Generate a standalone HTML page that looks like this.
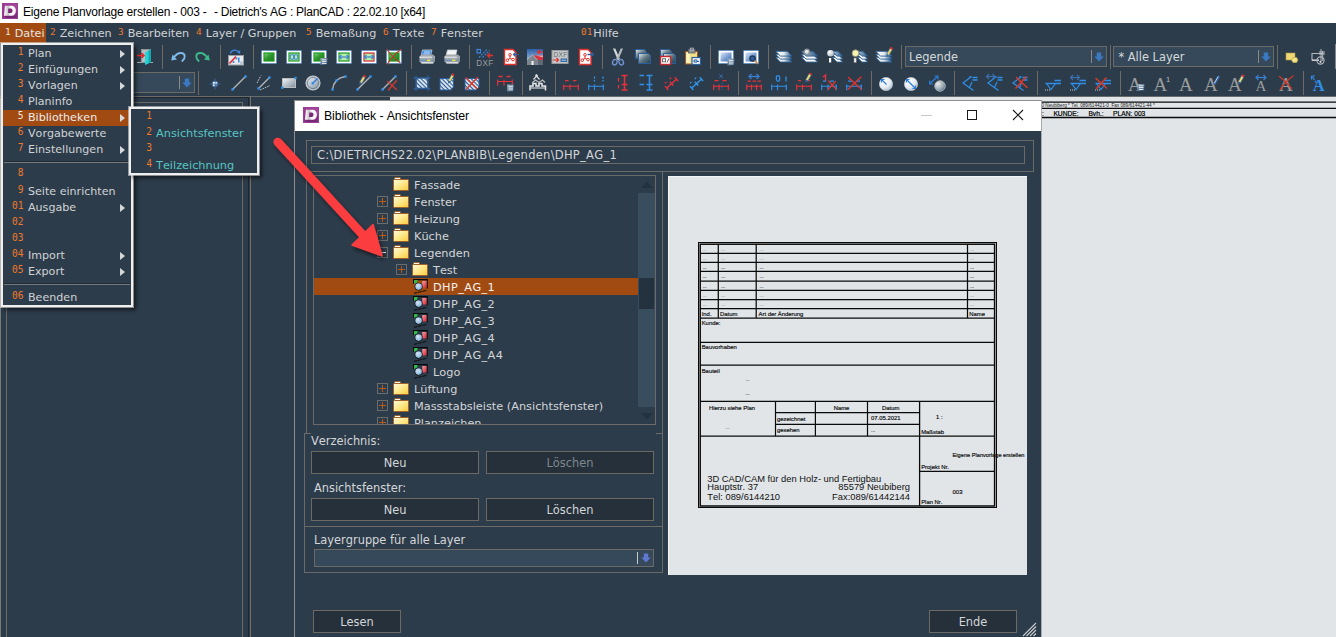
<!DOCTYPE html>
<html lang="de">
<head>
<meta charset="utf-8">
<title>Eigene Planvorlage erstellen - 003</title>
<style>
*{box-sizing:border-box;margin:0;padding:0}
html,body{width:1336px;height:637px;overflow:hidden;background:#2d3c4b}
body{position:relative;font-kerning:none;font-family:"DejaVu Sans","Liberation Sans",sans-serif;font-size:11.3px;color:#d3d6d8}
.a{position:absolute}
.t{position:absolute;white-space:nowrap;line-height:16px}
.ln{position:absolute;background:#6e6b67}
.paper{background:#e1e5e8}
/* title bar */
#tb{left:0;top:0;width:1336px;height:23px;background:#fff}
#tb .t{font-family:"Liberation Sans",sans-serif;font-size:12px;color:#000;top:4px;letter-spacing:-0.2px}
/* menubar */
#mb{left:0;top:23px;width:1336px;height:20px;background:#2d3c4b}
#mb .t{top:2.5px;font-size:11.2px;color:#d0d3d5}
#mb .n{font-family:"DejaVu Sans Mono",monospace;font-size:9.4px;color:#ee7a2a;position:relative;top:-1.5px;margin-right:4px}
.hl{background:#a14b12}
/* menus */
.menu{position:absolute;background:#2d3c4b;border:2px solid #efefef;outline:1px solid rgba(235,235,235,.55);box-shadow:3px 3px 4px rgba(0,0,0,.6)}
.mi{position:absolute;left:0;height:16px;line-height:16px;white-space:nowrap;font-size:11.1px;color:#d0d3d5}
.mi .n{position:absolute;top:-2px;font-family:"DejaVu Sans Mono",monospace;font-size:9.6px;color:#ee7a2a;text-align:right;width:14px}
.mi .x{position:absolute;left:25px;top:-0.5px}
.mi .ar{position:absolute;left:116px;top:4px;width:0;height:0;border-left:5px solid #d8d8d8;border-top:4px solid transparent;border-bottom:4px solid transparent}
.sep{position:absolute;height:1px;background:#777a7c;box-shadow:0 -1px 0 #202b36}
.cy{color:#55c6c3;font-size:11.3px}
/* dialog */
.btn{position:absolute;background:#25303b;border:1px solid #6c6a64;text-align:center;font-size:11.6px;color:#d3d6d8;line-height:20px;height:22px}
.fld{position:absolute;background:#35495a;border:1px solid #6c6a64}
.grp{position:absolute;border:1px solid #6c6a64}
.tree{font-size:11.3px;color:#d3d6d8}
</style>
</head>
<body>
<!-- ===== main drawing paper (right) ===== -->
<div class="a paper" style="left:390px;top:97px;width:946px;height:540px"></div>
<svg class="a" style="left:1042px;top:97px;font-family:'Liberation Sans',sans-serif" width="294" height="30" viewBox="1042 97 294 30">
<path d="M1042 102.200H1336" stroke="#0a0a0a" stroke-width="1.300"/><path d="M1042 108.400H1336" stroke="#0a0a0a" stroke-width="1.100"/><path d="M1042 117.600H1336" stroke="#0a0a0a" stroke-width="1.500"/>
<text x="1041.500" y="107.200" font-size="4.650" fill="#222">0 Neubiberg * Tel. 089/614421-0&#160; Fax 089/614421-44 *</text>
<text x="1042" y="115.900" font-size="6.700" fill="#000" stroke="#000" stroke-width=".2">:</text>
<text x="1053.400" y="115.900" font-size="6.700" fill="#000" stroke="#000" stroke-width=".2">KUNDE:</text>
<text x="1088.400" y="115.900" font-size="6.700" fill="#000" stroke="#000" stroke-width=".2">Bvh.:</text>
<text x="1113" y="115.900" font-size="6.700" fill="#000" stroke="#000" stroke-width=".2">PLAN: 003</text>
</svg>

<!-- ===== title bar ===== -->
<div class="a" id="tb">
  <svg class="a" style="left:2px;top:3px" width="16" height="16" viewBox="0 0 16 16"><defs><linearGradient id="lgP" x1="0" y1="1" x2="1" y2="0"><stop offset="0" stop-color="#8a2c83"/><stop offset="1" stop-color="#a94ba2"/></linearGradient><linearGradient id="lgD" x1="0" y1="0" x2="1" y2="0"><stop offset="0" stop-color="#ffffff"/><stop offset=".35" stop-color="#c9c4c8"/><stop offset=".6" stop-color="#ffffff"/><stop offset="1" stop-color="#f4eef3"/></linearGradient></defs><rect width="16" height="16" fill="url(#lgP)"/><path d="M2.100 12.800L13 12.800L16 16H5.300z" fill="#6a2266" opacity=".7"/><path d="M13.800 7.800L16 10V16L13 12.800z" fill="#6a2266" opacity=".55"/><rect x=".5" y=".5" width="15" height="15" fill="none" stroke="#9a3f93" stroke-width="1"/><path d="M2.900 2.800H9.300C12.400 2.800 13.900 4.900 13.900 7.800S12.400 12.800 9.300 12.800H2z" fill="url(#lgD)"/><path d="M6.300 5.600H8.800C10 5.600 10.500 6.600 10.500 7.800S10 10 8.800 10H6z" fill="#7a2a75"/></svg>
  <div class="t" id="t1" style="left:23px">Eigene Planvorlage erstellen - 003 -</div><div class="t" id="t2" style="left:214px;letter-spacing:-0.27px">- Dietrich's AG : PlanCAD : 22.02.10 [x64]</div>
</div>

<!-- ===== menubar ===== -->
<div class="a" id="mb">
  <div class="a hl" style="left:0;top:0;width:46px;height:20px"></div>
  <div class="t" style="left:5px;color:#e4e4e4"><span class="n" style="color:#f0e6dc">1</span>Datei</div>
  <div class="t" style="left:50px"><span class="n">2</span>Zeichnen</div>
  <div class="t" style="left:118px"><span class="n">3</span>Bearbeiten</div>
  <div class="t" style="left:196px"><span class="n">4</span>Layer / Gruppen</div>
  <div class="t" style="left:306px"><span class="n">5</span>Bemaßung</div>
  <div class="t" style="left:383px"><span class="n">6</span>Texte</div>
  <div class="t" style="left:431px"><span class="n">7</span>Fenster</div>
  <div class="t" style="left:581px"><span class="n" style="margin-right:1px">01</span>Hilfe</div>
</div>

<!-- TOOLBARS -->
<div id="tbars">
<svg class="a" width="0" height="0" style="left:0;top:0"><defs>
<linearGradient id="gG" x1="0" y1="0" x2="1" y2="1"><stop offset="0" stop-color="#7fd07a"/><stop offset=".45" stop-color="#2f9a2f"/><stop offset="1" stop-color="#1d7d22"/></linearGradient>
<linearGradient id="gB" x1="0" y1="0" x2="1" y2="1"><stop offset="0" stop-color="#d8e6f8"/><stop offset="1" stop-color="#2f62b0"/></linearGradient>
<linearGradient id="gD" x1="0" y1="0" x2="1" y2="1"><stop offset="0" stop-color="#e8eef0"/><stop offset=".5" stop-color="#5e7680"/><stop offset="1" stop-color="#1f3f50"/></linearGradient>
<linearGradient id="gS" x1="0" y1="0" x2="1" y2="1"><stop offset="0" stop-color="#f4f6f8"/><stop offset="1" stop-color="#7d8e9e"/></linearGradient>
<radialGradient id="gBall" cx=".35" cy=".3" r=".8"><stop offset="0" stop-color="#ffffff"/><stop offset=".6" stop-color="#e4ebf2"/><stop offset="1" stop-color="#9db4cc"/></radialGradient>
<radialGradient id="gBall2" cx=".3" cy=".3" r=".9"><stop offset="0" stop-color="#e8ecef"/><stop offset=".6" stop-color="#9aa4ad"/><stop offset="1" stop-color="#27588f"/></radialGradient>
<linearGradient id="gL" x1="0" y1="0" x2="1" y2="0"><stop offset="0" stop-color="#ffffff"/><stop offset=".5" stop-color="#e4eaf0"/><stop offset=".8" stop-color="#6f8fb0"/><stop offset="1" stop-color="#2d6096"/></linearGradient><linearGradient id="gLd" x1="0" y1="0" x2="1" y2="0"><stop offset="0" stop-color="#b4c4d4"/><stop offset="1" stop-color="#2d5f8f"/></linearGradient><radialGradient id="gBulb" cx=".35" cy=".3" r=".8"><stop offset="0" stop-color="#ffffff"/><stop offset="1" stop-color="#a9b8c6"/></radialGradient>
<linearGradient id="gList" x1="0" y1="0" x2="1" y2="1"><stop offset="0" stop-color="#9fb3c4"/><stop offset="1" stop-color="#1d3f63"/></linearGradient>
<linearGradient id="gSky" x1="0" y1="0" x2="0" y2="1"><stop offset="0" stop-color="#2a5fa8"/><stop offset="1" stop-color="#c9dcf2"/></linearGradient>
</defs></svg>
<svg class="a" style="left:136px;top:47px" width="20" height="20" viewBox="0 0 20 20"><rect x="5.500" y="2.500" width="9" height="13" fill="#b9bcbf" stroke="#8e9296" stroke-width="1"/><path d="M1 15.500H5.500M14.500 15.500H17" stroke="#a9adb0" stroke-width="1"/><path d="M9 5.500L15 2.200V15.200L9 18z" fill="#25d3d6"/><path d="M12.500 3.600L15 2.200V15.200L12.500 16.400z" fill="#13a7ad"/><path d="M1 8.500H8M5.500 6L8 8.500L5.500 11" stroke="#e8262c" stroke-width="1.500" fill="none"/></svg>
<div class="ln" style="left:162px;top:45px;width:1px;height:24px"></div>
<svg class="a" style="left:168px;top:47px" width="20" height="20" viewBox="0 0 20 20"><path d="M14.300 14C17.800 11 17.500 6.500 13.500 6C10 5.600 7.500 8 5.500 11" stroke="#80b8e8" stroke-width="1.900" fill="none" stroke-linecap="round"/><path d="M3.200 13.600L4.500 7.500L9 12.600z" fill="#80b8e8"/></svg>
<svg class="a" style="left:192.5px;top:47px" width="20" height="20" viewBox="0 0 20 20"><path d="M5.700 14C2.200 11 2.500 6.500 6.500 6C10 5.600 12.500 8 14.500 11" stroke="#3cb88a" stroke-width="1.900" fill="none" stroke-linecap="round"/><path d="M16.800 13.600L15.500 7.500L11 12.600z" fill="#3cb88a"/></svg>
<div class="ln" style="left:220px;top:45px;width:1px;height:24px"></div>
<svg class="a" style="left:226px;top:47px" width="20" height="20" viewBox="0 0 20 20"><rect x="2.500" y="8.500" width="15" height="9.500" fill="#e6eaee" stroke="#9a9ea2" stroke-width="1"/><path d="M3.500 16.500L10 9.500" stroke="#e8262c" stroke-width="1.600"/><circle cx="10.500" cy="11.500" r="1" fill="#2f7fd8"/><circle cx="7.500" cy="15" r="1" fill="#2f7fd8"/><path d="M12.800 10.500V15.500" stroke="#2f7fd8" stroke-width="1.400"/><rect x="14" y="14.500" width="3" height="3" fill="#b8c6d6"/><path d="M4.500 6.500C5 2.500 11 2 13 5.500" stroke="#3b86dc" stroke-width="1.400" fill="none"/><path d="M14.300 3L14 7L10.800 5.200z" fill="#3b86dc"/></svg>
<div class="ln" style="left:253px;top:45px;width:1px;height:24px"></div>
<svg class="a" style="left:259px;top:47px" width="20" height="20" viewBox="0 0 20 20"><rect x="2" y="3" width="16" height="14" fill="#2d5f9c"/><rect x="2.700" y="3.700" width="14.600" height="12.600" fill="#ffffff"/><rect x="4.400" y="5.400" width="11.200" height="9.200" fill="#1f971f"/><rect x="5.600" y="6.600" width="8.800" height="6.800" fill="url(#gG)"/></svg>
<svg class="a" style="left:284px;top:47px" width="20" height="20" viewBox="0 0 20 20"><rect x="2" y="3" width="16" height="14" fill="#2d5f9c"/><rect x="2.700" y="3.700" width="14.600" height="12.600" fill="#ffffff"/><rect x="4.400" y="5.400" width="11.200" height="9.200" fill="#1f971f"/><rect x="5.600" y="6.600" width="8.800" height="6.800" fill="#b4eeaa"/><rect x="6.200" y="7.800" width="3.600" height="4.400" rx="1.200" fill="none" stroke="#3b7fd0" stroke-width="1.100"/><rect x="10.200" y="7.800" width="3.600" height="4.400" rx="1.200" fill="none" stroke="#3b7fd0" stroke-width="1.100"/></svg>
<svg class="a" style="left:309px;top:47px" width="20" height="20" viewBox="0 0 20 20"><rect x="2" y="3" width="16" height="14" fill="#2d5f9c"/><rect x="2.700" y="3.700" width="14.600" height="12.600" fill="#ffffff"/><rect x="4.400" y="5.400" width="11.200" height="9.200" fill="#1f971f"/><rect x="5.600" y="6.600" width="8.800" height="6.800" fill="url(#gG)"/><rect x="11.5" y="11" width="7" height="7" fill="url(#gList)"/><path d="M13.0 12.8h4.5M13.0 14.6h4.5M13.0 16.4h4.5" stroke="#eef2f5" stroke-width="1"/></svg>
<svg class="a" style="left:334px;top:47px" width="20" height="20" viewBox="0 0 20 20"><rect x="2" y="3" width="16" height="14" fill="#2d5f9c"/><rect x="2.700" y="3.700" width="14.600" height="12.600" fill="#ffffff"/><rect x="4.400" y="5.400" width="11.200" height="9.200" fill="#1f971f"/><rect x="5.600" y="6.600" width="8.800" height="6.800" fill="#b4eeaa"/><path d="M5.8 10H14.2" stroke="#3b7fd0" stroke-width="1.2"/><path d="M7.5 7.8L5.3 10L7.5 12.2M12.5 7.8L14.7 10L12.5 12.2" stroke="#3b7fd0" stroke-width="1.2" fill="none"/></svg>
<svg class="a" style="left:359px;top:47px" width="20" height="20" viewBox="0 0 20 20"><rect x="2" y="3" width="16" height="14" fill="#2d5f9c"/><rect x="2.700" y="3.700" width="14.600" height="12.600" fill="#ffffff"/><rect x="4.400" y="5.400" width="11.200" height="9.200" fill="#d8262c"/><rect x="5.600" y="6.600" width="8.800" height="6.800" fill="#b4eeaa"/><path d="M5.8 10H14.2" stroke="#3b7fd0" stroke-width="1.2"/><path d="M7.5 7.8L5.3 10L7.5 12.2M12.5 7.8L14.7 10L12.5 12.2" stroke="#3b7fd0" stroke-width="1.2" fill="none"/></svg>
<svg class="a" style="left:384px;top:47px" width="20" height="20" viewBox="0 0 20 20"><rect x="2" y="3" width="16" height="14" fill="#2d5f9c"/><rect x="2.700" y="3.700" width="14.600" height="12.600" fill="#ffffff"/><rect x="4.400" y="5.400" width="11.200" height="9.200" fill="#1f971f"/><rect x="5.600" y="6.600" width="8.800" height="6.800" fill="url(#gG)"/><path d="M3 2.500C6 7 11 12 16 15.500M17 2.500C12 6 7 11 3.500 17" stroke="#b8402e" stroke-width="1.300" fill="none" stroke-linecap="round"/></svg>
<div class="ln" style="left:411px;top:45px;width:1px;height:24px"></div>
<svg class="a" style="left:417px;top:47px" width="20" height="20" viewBox="0 0 20 20"><path d="M5.500 3H15L13.500 9H4z" fill="#3f8fe8" stroke="#c9cdd1" stroke-width=".8"/><path d="M7 5h6M6.500 7h6" stroke="#eef1f4" stroke-width="1" opacity=".85"/><path d="M2.500 9.500L5 7.500H16L18 9.500V14L16 16.500H4.500L2.500 14.500z" fill="#a4a9ae"/><path d="M2.500 9.500H18V11H2.500z" fill="#d4d8dc"/><path d="M3 12.500H17.500V14.300H3z" fill="#6f95b8"/><path d="M4.500 15H16.500V16.500H4.500z" fill="#d9dcdf"/><rect x="10" y="12.600" width="3.500" height="1.500" fill="#f2e23a"/><path d="M14.500 8L18 9.500V14L16 16.500z" fill="#8a9096" opacity=".7"/></svg>
<svg class="a" style="left:442px;top:47px" width="20" height="20" viewBox="0 0 20 20"><path d="M5.500 3H15L13.500 9H4z" fill="#f4f5f6" stroke="#c9cdd1" stroke-width=".8"/><path d="M7 5h6M6.500 7h6" stroke="#eef1f4" stroke-width="1" opacity=".85"/><path d="M2.500 9.500L5 7.500H16L18 9.500V14L16 16.500H4.500L2.500 14.500z" fill="#a4a9ae"/><path d="M2.500 9.500H18V11H2.500z" fill="#d4d8dc"/><path d="M3 12.500H17.500V14.300H3z" fill="#6f95b8"/><path d="M4.500 15H16.500V16.500H4.500z" fill="#d9dcdf"/><rect x="10" y="12.600" width="3.500" height="1.500" fill="#f2e23a"/><path d="M14.500 8L18 9.500V14L16 16.500z" fill="#8a9096" opacity=".7"/></svg>
<div class="ln" style="left:469px;top:45px;width:1px;height:24px"></div>
<svg class="a" style="left:475px;top:48px" width="20" height="20" viewBox="0 0 20 20"><rect x="2" y="1.500" width="3.500" height="3.500" fill="none" stroke="#3b86dc" stroke-width="1.200"/><path d="M4 9.500L12 1.500M7.500 9.500L14.500 2.500" stroke="#3b86dc" stroke-width="1.100" stroke-dasharray="2 1"/><path d="M12.500 7.500H18M15 5L12.500 7.500L15 10" stroke="#e0322c" stroke-width="1.300" fill="none"/><text x="1.300" y="17.800" font-family="Liberation Sans,sans-serif" font-size="8.200" fill="#9a9c9c" letter-spacing=".3">DXF</text></svg>
<svg class="a" style="left:500px;top:47px" width="20" height="20" viewBox="0 0 20 20"><path d="M4.500 2.500H13L16 5.500V17.500H4.500z" fill="#ffffff" stroke="#e0322c" stroke-width="1.400"/><circle cx="10" cy="7.800" r="1.300" fill="none" stroke="#e0322c" stroke-width="1"/><circle cx="7.300" cy="13.200" r="1.300" fill="none" stroke="#e0322c" stroke-width="1"/><circle cx="13" cy="12.600" r="1.300" fill="none" stroke="#e0322c" stroke-width="1"/><path d="M10 9L10 11.500L8 12.500M10 11.500L12 12.200" stroke="#e0322c" stroke-width="1" fill="none"/><path d="M13.500 7.500H19M15.500 5.500L13.500 7.500L15.500 9.500" stroke="#2d5f9c" stroke-width="1.200" fill="none"/></svg>
<svg class="a" style="left:525px;top:47px" width="20" height="20" viewBox="0 0 20 20"><rect x="2" y="2" width="16" height="16" fill="url(#gSky)"/><path d="M8 8.500H18V13.500H12z" fill="#d8323c"/><path d="M11 8.500H18V10.500z" fill="#f0a0a4"/><path d="M2 13L7.500 8L12.500 13V18H2z" fill="#7d858c"/><path d="M12.500 13H18V18H12.500z" fill="#5f6a74"/><rect x="6.500" y="14" width="2" height="4" fill="#f4f4f4"/><path d="M2 13L7.500 8L12.500 13" stroke="#a9b0b6" stroke-width="1" fill="none"/><path d="M12.500 5H18M14.500 3L12.500 5L14.500 7" stroke="#e0322c" stroke-width="1.300" fill="none"/></svg>
<svg class="a" style="left:550px;top:47px" width="20" height="20" viewBox="0 0 20 20"><rect x="2" y="3.500" width="16" height="13" fill="#c4c7c9" stroke="#9a9d9f" stroke-width="1"/><text x="3.500" y="10" font-family="Liberation Sans,sans-serif" font-size="6.500" fill="#6a6d70" letter-spacing=".4">DXF</text><path d="M3 13H8.500M6.500 11L8.500 13L6.500 15" stroke="#e0322c" stroke-width="1.200" fill="none"/><rect x="10.500" y="11.500" width="6.500" height="3.500" fill="#2d6aa6"/><rect x="11.500" y="12.700" width="4.500" height="1.200" fill="#9bbbd6"/></svg>
<svg class="a" style="left:575px;top:47px" width="20" height="20" viewBox="0 0 20 20"><path d="M4.500 2.500H13L16 5.500V17.500H4.500z" fill="#ffffff" stroke="#e0322c" stroke-width="1.400"/><circle cx="10" cy="7.800" r="1.300" fill="none" stroke="#e0322c" stroke-width="1"/><circle cx="7.300" cy="13.200" r="1.300" fill="none" stroke="#e0322c" stroke-width="1"/><circle cx="13" cy="12.600" r="1.300" fill="none" stroke="#e0322c" stroke-width="1"/><path d="M10 9L10 11.500L8 12.500M10 11.500L12 12.200" stroke="#e0322c" stroke-width="1" fill="none"/><path d="M12.500 7.500H18M16.500 5.500L18.500 7.500L16.500 9.500" stroke="#2d5f9c" stroke-width="1.300" fill="none"/></svg>
<div class="ln" style="left:602px;top:45px;width:1px;height:24px"></div>
<svg class="a" style="left:608px;top:47px" width="20" height="20" viewBox="0 0 20 20"><path d="M5 1.500L7.300 1.500L11.800 12L9.800 13.200z" fill="#d4d7da"/><path d="M15 1.500L12.700 1.500L8.200 12L10.200 13.200z" fill="#b4b8bc"/><ellipse cx="6.800" cy="15.200" rx="2.200" ry="2.700" fill="none" stroke="#6f90cc" stroke-width="1.400" transform="rotate(20 6.800 15.200)"/><ellipse cx="13.200" cy="15.200" rx="2.200" ry="2.700" fill="none" stroke="#6f90cc" stroke-width="1.400" transform="rotate(-20 13.200 15.200)"/></svg>
<svg class="a" style="left:633px;top:47px" width="20" height="20" viewBox="0 0 20 20"><path d="M2.500 2.500H11.500L13.500 4.500V11.500H2.500z" fill="url(#gD)" stroke="#2d5f9c" stroke-width="1"/><path d="M5.500 6.500H15.500L17.500 8.500V16.500H5.500z" fill="url(#gD)" stroke="#2d5f9c" stroke-width="1"/></svg>
<svg class="a" style="left:658px;top:47px" width="20" height="20" viewBox="0 0 20 20"><path d="M2.500 2.500H11.500L13.500 4.500V11.500H2.500z" fill="url(#gD)" stroke="#2d5f9c" stroke-width="1"/><path d="M5.500 6.500H15.500L17.500 8.500V16.500H5.500z" fill="url(#gD)" stroke="#2d5f9c" stroke-width="1"/><rect x="2.500" y="9.500" width="10" height="8" fill="#ffffff" stroke="#c8282c" stroke-width="1.400"/><rect x="4.500" y="11.800" width="3" height="3" fill="none" stroke="#6a6d70" stroke-width="1"/><path d="M9 15.500L11 11.500" stroke="#6a6d70" stroke-width="1"/></svg>
<svg class="a" style="left:683px;top:47px" width="20" height="20" viewBox="0 0 20 20"><rect x="2.500" y="4.500" width="12" height="12.500" fill="#f1e28a" stroke="#9a5a2a" stroke-width="1"/><rect x="3.500" y="5.500" width="3" height="10.500" fill="#fbf4c4"/><rect x="5.500" y="2.500" width="6.500" height="3.500" fill="#8a8f94" stroke="#5c6166" stroke-width=".8"/><rect x="7.300" y="1.200" width="3" height="2" fill="none" stroke="#aeb2b6" stroke-width="1"/><rect x="9" y="10.500" width="8.500" height="7" fill="#e9f0f8" stroke="#2d5f9c" stroke-width="1.200"/><path d="M11 13H14V15H11zM14 14.500H16" stroke="#2d5f9c" stroke-width="1" fill="none"/></svg>
<div class="ln" style="left:710px;top:45px;width:1px;height:24px"></div>
<svg class="a" style="left:716px;top:47px" width="20" height="20" viewBox="0 0 20 20"><rect x="2" y="3" width="16" height="14" fill="#2d5f9c"/><rect x="2.700" y="3.700" width="14.600" height="12.600" fill="#ffffff"/><rect x="4.500" y="5.500" width="11" height="9" fill="url(#gB)"/><rect x="11.5" y="11.5" width="7" height="7" fill="url(#gList)"/><path d="M13.0 13.3h4.5M13.0 15.1h4.5M13.0 16.9h4.5" stroke="#eef2f5" stroke-width="1"/></svg>
<svg class="a" style="left:741px;top:47px" width="20" height="20" viewBox="0 0 20 20"><rect x="2" y="3" width="16" height="14" fill="#2d5f9c"/><rect x="2.700" y="3.700" width="14.600" height="12.600" fill="#ffffff"/><rect x="4.500" y="5.500" width="11" height="9" fill="url(#gB)"/><circle cx="11.500" cy="11.500" r="2.600" fill="#2d5f9c" stroke="#1b3350" stroke-width="1.200"/><path d="M13.500 13.500L17 17" stroke="#c88a4a" stroke-width="1.600"/></svg>
<div class="ln" style="left:768px;top:45px;width:1px;height:24px"></div>
<svg class="a" style="left:774px;top:47px" width="20" height="20" viewBox="0 0 20 20"><path d="M1.8 10.3H13.5L18.0 15.100000000000001H6.3z" fill="url(#gL)" stroke="#2d5f8f" stroke-width=".9" stroke-linejoin="round"/><path d="M1.8 7.3H13.5L18.0 12.1H6.3z" fill="url(#gL)" stroke="#2d5f8f" stroke-width=".9" stroke-linejoin="round"/><path d="M1.8 4.3H13.5L18.0 9.1H6.3z" fill="url(#gL)" stroke="#2d5f8f" stroke-width=".9" stroke-linejoin="round"/></svg>
<svg class="a" style="left:798.6px;top:47px" width="20" height="20" viewBox="0 0 20 20"><path d="M2.5 10.3H14.0L18.5 15.100000000000001H7.0z" fill="#f4f6f8" stroke="#2d5f8f" stroke-width=".9" stroke-linejoin="round"/><path d="M2.5 7.3H14.0L18.5 12.1H7.0z" fill="#f4f6f8" stroke="#2d5f8f" stroke-width=".9" stroke-linejoin="round"/><path d="M2.5 4.3H14.0L18.5 9.1H7.0z" fill="url(#gLd)" stroke="#2d5f8f" stroke-width=".9" stroke-linejoin="round"/><circle cx="7.800" cy="4.800" r="2.600" fill="#e4e7ea" stroke="#8a8f94" stroke-width="1.200"/><path d="M9.800 6.500L11.500 8" stroke="#8a8f94" stroke-width="1.200"/></svg>
<svg class="a" style="left:823.5px;top:47px" width="20" height="20" viewBox="0 0 20 20"><path d="M8.3 10.3H14.0L18.5 15.100000000000001H12.8z" fill="#f4f6f8" stroke="#2d5f8f" stroke-width=".9" stroke-linejoin="round"/><path d="M8.3 7.3H14.0L18.5 12.1H12.8z" fill="#f4f6f8" stroke="#2d5f8f" stroke-width=".9" stroke-linejoin="round"/><path d="M8.3 4.3H14.0L18.5 9.1H12.8z" fill="url(#gLd)" stroke="#2d5f8f" stroke-width=".9" stroke-linejoin="round"/><circle cx="6.500" cy="6.200" r="3.300" fill="url(#gBulb)"/><rect x="5" y="11" width="2.200" height="4.500" fill="#f4f6f8"/></svg>
<svg class="a" style="left:848.8px;top:47px" width="20" height="20" viewBox="0 0 20 20"><path d="M8.3 10.3H14.0L18.5 15.100000000000001H12.8z" fill="#f4f6f8" stroke="#2d5f8f" stroke-width=".9" stroke-linejoin="round"/><path d="M8.3 7.3H14.0L18.5 12.1H12.8z" fill="#f4f6f8" stroke="#2d5f8f" stroke-width=".9" stroke-linejoin="round"/><path d="M8.3 4.3H14.0L18.5 9.1H12.8z" fill="url(#gLd)" stroke="#2d5f8f" stroke-width=".9" stroke-linejoin="round"/><circle cx="6.500" cy="6.200" r="3.400" fill="#f8f4b0" stroke="#8a8a72" stroke-width=".8"/><rect x="5" y="11" width="2.200" height="4.500" fill="#f4f6f8" stroke="#8a8a8a" stroke-width=".5"/></svg>
<svg class="a" style="left:874px;top:47px" width="20" height="20" viewBox="0 0 20 20"><path d="M1.8 10.3H13.5L18.0 15.100000000000001H6.3z" fill="url(#gL)" stroke="#2d5f8f" stroke-width=".9" stroke-linejoin="round"/><path d="M1.8 7.3H13.5L18.0 12.1H6.3z" fill="url(#gL)" stroke="#2d5f8f" stroke-width=".9" stroke-linejoin="round"/><path d="M1.8 4.3H13.5L18.0 9.1H6.3z" fill="url(#gL)" stroke="#2d5f8f" stroke-width=".9" stroke-linejoin="round"/><g transform="translate(14.5 6.5) rotate(30)"><rect x="-1.3" y="-5.500" width="2.600" height="7" fill="#f3d86a" stroke="#2f66a8" stroke-width=".6"/><rect x="-1.300" y="-7" width="2.600" height="2" fill="#d8302c"/><path d="M-1.300 1.500L0 4.200 1.300 1.500z" fill="#2f66a8"/></g></svg>
<div class="ln" style="left:901px;top:45px;width:1px;height:24px"></div>
<div class="fld" style="left:905px;top:46px;width:202px;height:21px"></div><div class="a" style="left:1091px;top:50px;width:1px;height:13px;background:#8a8a86"></div><svg class="a" style="left:1094px;top:51.5px" width="10" height="10" viewBox="0 0 10 10"><path d="M2.800 .5H7.200V4.500H9.800L5 9.500L.2 4.500H2.800z" fill="#3a78c0"/></svg><div class="t" style="left:909px;top:49.0px;font-size:11.400px;color:#d6d9db">Legende</div>
<div class="ln" style="left:1110px;top:45px;width:1px;height:24px"></div>
<div class="fld" style="left:1113px;top:46px;width:161px;height:21px"></div><div class="a" style="left:1258px;top:50px;width:1px;height:13px;background:#8a8a86"></div><svg class="a" style="left:1261px;top:51.5px" width="10" height="10" viewBox="0 0 10 10"><path d="M2.800 .5H7.200V4.500H9.800L5 9.500L.2 4.500H2.800z" fill="#3a78c0"/></svg><div class="t" style="left:1118.5px;top:49.0px;font-size:11.400px;color:#d6d9db">* Alle Layer</div>
<div class="ln" style="left:1277px;top:45px;width:1px;height:24px"></div>
<svg class="a" style="left:1282px;top:48px" width="20" height="20" viewBox="0 0 20 20"><rect x="4" y="5" width="9" height="7" fill="#efd872" stroke="#a89a4a" stroke-width=".6"/><path d="M11 9.500L14.500 9.500L16 12L14.500 14.500H11L9.500 12z" fill="#f4e28a" stroke="#b8a850" stroke-width=".8"/></svg>
<svg class="a" style="left:1308px;top:47px" width="20" height="20" viewBox="0 0 20 20"><path d="M3.500 6.500H15.500M4 6.500V13H11" stroke="#b4b8ba" stroke-width="1.100" fill="none"/><path d="M4 13.300H11" stroke="#d8dadc" stroke-width="1.200"/><path d="M13 2V15.500M14.700 4V14M11 5H17M11 7H17" stroke="#c4c7c9" stroke-width=".9"/><circle cx="12.500" cy="13.500" r="3.600" fill="none" stroke="#b4b8ba" stroke-width="1.100"/><circle cx="12.300" cy="14.800" r=".9" fill="#e8eaec"/></svg>
<div class="a" style="left:1335px;top:44px;width:1px;height:25px;background:#85888a"></div>
<div class="fld" style="left:60px;top:72px;width:135px;height:21px"></div><div class="a" style="left:179px;top:76px;width:1px;height:13px;background:#8a8a86"></div><svg class="a" style="left:182px;top:77.5px" width="10" height="10" viewBox="0 0 10 10"><path d="M2.800 .5H7.200V4.500H9.800L5 9.500L.2 4.500H2.800z" fill="#3a78c0"/></svg>
<div class="ln" style="left:198px;top:71px;width:1px;height:24px"></div>
<svg class="a" style="left:204.5px;top:73.5px" width="20" height="20" viewBox="0 0 20 20"><path d="M10 4.500V15.500M4.500 10H15.500" stroke="#2f66a8" stroke-width="1.100"/><rect x="7.300" y="7.300" width="5.400" height="5.400" fill="#2f5f9a"/><rect x="7.800" y="7.800" width="2" height="2" fill="#f0f4f8"/><rect x="10.300" y="7.800" width="2" height="2" fill="#cfdbe8"/><rect x="7.800" y="10.300" width="2" height="2" fill="#cfdbe8"/><rect x="10.300" y="10.300" width="2" height="2" fill="#5f86b4"/></svg>
<svg class="a" style="left:229px;top:73px" width="20" height="20" viewBox="0 0 20 20"><path d="M3.500 16.500L16.500 3.500" stroke="#aeb2b6" stroke-width="1.500"/><rect x="2.3" y="15.3" width="2.4" height="2.4" fill="#2f8fe8"/><rect x="15.3" y="2.3" width="2.4" height="2.4" fill="#2f8fe8"/></svg>
<svg class="a" style="left:253.6px;top:73px" width="20" height="20" viewBox="0 0 20 20"><path d="M3 10L7 2.500M6 17L16 12.500" stroke="#c6c9cc" stroke-width="1" stroke-dasharray="1.600 1"/><path d="M4.500 15.500L15.500 4.500" stroke="#aeb2b6" stroke-width="1.500"/><rect x="3.3" y="14.3" width="2.4" height="2.4" fill="#2f8fe8"/><rect x="14.3" y="3.3" width="2.4" height="2.4" fill="#2f8fe8"/></svg>
<svg class="a" style="left:279px;top:73px" width="20" height="20" viewBox="0 0 20 20"><rect x="3.500" y="5.500" width="13" height="9" fill="url(#gS)" stroke="#b9bdc0" stroke-width="1"/><rect x="15.3" y="3.8" width="2.4" height="2.4" fill="#2f8fe8"/><rect x="2.0999999999999996" y="13.5" width="2.4" height="2.4" fill="#2f8fe8"/></svg>
<svg class="a" style="left:303px;top:73px" width="20" height="20" viewBox="0 0 20 20"><circle cx="10" cy="10" r="7" fill="url(#gS)" stroke="#c6c9cc" stroke-width="1.200"/><circle cx="10" cy="10" r="5.600" fill="none" stroke="#5f7890" stroke-width=".8"/><path d="M10 10L14.500 5.500" stroke="#2f7fd8" stroke-width="1.500"/><rect x="8.600000000000001" y="9.0" width="2.4" height="2.4" fill="#2f8fe8"/></svg>
<svg class="a" style="left:328.6px;top:73px" width="20" height="20" viewBox="0 0 20 20"><path d="M3.500 16.500C4.500 9 9 4.500 16.500 3.500" stroke="#aeb2b6" stroke-width="1.400" fill="none"/><rect x="2.3" y="15.3" width="2.4" height="2.4" fill="#2f8fe8"/><rect x="6.3" y="6.3" width="2.4" height="2.4" fill="#2f8fe8"/><rect x="15.3" y="2.3" width="2.4" height="2.4" fill="#2f8fe8"/></svg>
<svg class="a" style="left:353.6px;top:73px" width="20" height="20" viewBox="0 0 20 20"><path d="M3.500 16.500L16.500 3.500" stroke="#aeb2b6" stroke-width="1.500"/><rect x="2.3" y="15.3" width="2.4" height="2.4" fill="#2f8fe8"/><rect x="15.3" y="2.3" width="2.4" height="2.4" fill="#2f8fe8"/><g transform="translate(7.5 8.5) rotate(30)"><rect x="-1.3" y="-5.500" width="2.600" height="7" fill="#f3d86a" stroke="#2f66a8" stroke-width=".6"/><rect x="-1.300" y="-7" width="2.600" height="2" fill="#d8302c"/><path d="M-1.300 1.500L0 4.200 1.300 1.500z" fill="#2f66a8"/></g></svg>
<svg class="a" style="left:379px;top:73px" width="20" height="20" viewBox="0 0 20 20"><path d="M3.500 16.500L16.500 3.500" stroke="#aeb2b6" stroke-width="1.500"/><rect x="2.3" y="15.3" width="2.4" height="2.4" fill="#2f8fe8"/><rect x="15.3" y="2.3" width="2.4" height="2.4" fill="#2f8fe8"/><path d="M8.500 8.500L17.500 16.500M17.500 7.500L9.500 17" stroke="#d43a2c" stroke-width="1.200" stroke-linecap="round"/></svg>
<div class="ln" style="left:406px;top:71px;width:1px;height:24px"></div>
<svg class="a" width="0" height="0"><defs><pattern id="hp" width="3" height="3" patternUnits="userSpaceOnUse" patternTransform="rotate(-45)"><rect width="3" height="3" fill="#2d5f9c"/><rect width="1.700" height="3" fill="#f4f6f8"/></pattern></defs></svg>
<svg class="a" style="left:412px;top:73px" width="20" height="20" viewBox="0 0 20 20"><rect x="4.500" y="5" width="11" height="10.500" fill="url(#hp)"/><path d="M4 2.500V18M16 2.500V18M1.500 5H18.500M1.500 15.500H18.500" stroke="#2d5f9c" stroke-width="1.300"/></svg>
<svg class="a" style="left:437px;top:73px" width="20" height="20" viewBox="0 0 20 20"><path d="M3 5.500H16.500V14L13.500 17H3z" fill="url(#hp)" stroke="#2d5f9c" stroke-width="1"/><g transform="translate(13 7) rotate(30)"><rect x="-1.3" y="-5.500" width="2.600" height="7" fill="#f3d86a" stroke="#2f66a8" stroke-width=".6"/><rect x="-1.300" y="-7" width="2.600" height="2" fill="#d8302c"/><path d="M-1.300 1.500L0 4.200 1.300 1.500z" fill="#2f66a8"/></g></svg>
<svg class="a" style="left:462px;top:73px" width="20" height="20" viewBox="0 0 20 20"><path d="M3 5.500H17V14L14 17H3z" fill="url(#hp)" stroke="#2d5f9c" stroke-width="1"/><path d="M4 5L15 15.500M15.500 4.500L4.500 16" stroke="#d43a2c" stroke-width="1.500" stroke-linecap="round"/></svg>
<div class="ln" style="left:489px;top:71px;width:1px;height:24px"></div>
<svg class="a" style="left:495px;top:73px" width="20" height="20" viewBox="0 0 20 20"><path d="M3.500 3.500H7.500M11.500 3.500H15.500" stroke="#e8323a" stroke-width="1.300"/><path d="M2 8.5H18M2.7 6.5V12.7M9 6.5V12.7M17.3 6.5V12.7" stroke="#e8323a" stroke-width="1.15" fill="none"/><rect x="12" y="11.5" width="7" height="7" fill="url(#gList)"/><path d="M13.5 13.3h4.5M13.5 15.1h4.5M13.5 16.9h4.5" stroke="#eef2f5" stroke-width="1"/></svg>
<div class="ln" style="left:522px;top:71px;width:1px;height:24px"></div>
<svg class="a" style="left:528px;top:73px" width="20" height="20" viewBox="0 0 20 20"><path d="M2 17.500V13H5V10.500H8V13H11V10.500H14V13H17.500V17.500" stroke="#e8eaec" stroke-width="1.500" fill="none"/><path d="M2 15H17.500" stroke="#c6c9cc" stroke-width="1.300"/><path d="M4 10L7.500 7L11 9.500L14.500 7L17 9.500" stroke="#b9bdc0" stroke-width="1.300" fill="none"/><path d="M5.500 6.500L8.500 3L11.500 6.500" stroke="#d6d9dc" stroke-width="1.200" fill="none"/><circle cx="8.500" cy="2.500" r="1.200" fill="#e8eaec"/></svg>
<div class="ln" style="left:555px;top:71px;width:1px;height:24px"></div>
<svg class="a" style="left:561px;top:73px" width="20" height="20" viewBox="0 0 20 20"><path d="M4 7.700H7.500M12 7.700H15.500" stroke="#e8323a" stroke-width="1.300"/><path d="M2 13.2H18M2.7 11.399999999999999V17.2M9 11.399999999999999V17.2M17.3 11.399999999999999V17.2" stroke="#e8323a" stroke-width="1.15" fill="none"/></svg>
<svg class="a" style="left:586px;top:73px" width="20" height="20" viewBox="0 0 20 20"><path d="M8.500 3.500V8.500M17 3.500V8.500" stroke="#2f8fe8" stroke-width="1.300" stroke-dasharray="2.200 1.200"/><path d="M2 13.2H18M2.7 11.399999999999999V17.2M8.5 11.399999999999999V17.2M17.3 11.399999999999999V17.2" stroke="#2f8fe8" stroke-width="1.15" fill="none"/></svg>
<svg class="a" style="left:613.5px;top:73px" width="20" height="20" viewBox="0 0 20 20"><path d="M4.500 5V8.500M4.500 12V15.500" stroke="#e8323a" stroke-width="1.300"/><path d="M10.500 2V17.500M7.500 2.500H13.500M7.500 11.500H13.500M7.500 17H13.500" stroke="#e8323a" stroke-width="1.500" fill="none"/></svg>
<svg class="a" style="left:638px;top:73px" width="20" height="20" viewBox="0 0 20 20"><path d="M1.500 2.500H6M1.500 11.500H6" stroke="#2f8fe8" stroke-width="1.300"/><path d="M11.500 2V17.500M8.500 2.500H14.500M8.500 11.500H14.500M8.500 17H14.500" stroke="#2f8fe8" stroke-width="1.500" fill="none"/></svg>
<svg class="a" style="left:661px;top:73px" width="20" height="20" viewBox="0 0 20 20"><g transform="translate(1.5 1.5) scale(.85) rotate(-42 10 10)"><path d="M4.500 5.500H8M12 5.500H15.500" stroke="#e8323a" stroke-width="1.300" stroke-dasharray="2.200 1"/><path d="M1.500 11H18.500M2.200 8V14M10 8V14M17.800 8V14" stroke="#e8323a" stroke-width="1.500" fill="none"/></g></svg>
<svg class="a" style="left:686px;top:73px" width="20" height="20" viewBox="0 0 20 20"><g transform="translate(1.5 1.5) scale(.85) rotate(-42 10 10)"><path d="M4.500 5.500H8M12 5.500H15.500" stroke="#2f9af0" stroke-width="1.300" stroke-dasharray="2.200 1"/><path d="M1.500 11H18.500M2.200 8V14M10 8V14M17.800 8V14" stroke="#2f9af0" stroke-width="1.500" fill="none"/></g></svg>
<svg class="a" style="left:711px;top:73px" width="20" height="20" viewBox="0 0 20 20"><path d="M8.200 1.500L11.800 5M11.800 1.500L8.200 5" stroke="#3b6fb0" stroke-width="1"/><path d="M3.500 7.700H7.500M11.500 7.700H15.500" stroke="#e8323a" stroke-width="1.300"/><path d="M11 9.500V17" stroke="#3b6fb0" stroke-width="1" stroke-dasharray="1 1.200"/><path d="M2 13.2H18M2.7 11.399999999999999V17.2M8 11.399999999999999V17.2M17.3 11.399999999999999V17.2" stroke="#e8323a" stroke-width="1.15" fill="none"/></svg>
<div class="ln" style="left:738px;top:71px;width:1px;height:24px"></div>
<svg class="a" style="left:744px;top:73px" width="20" height="20" viewBox="0 0 20 20"><path d="M5.5 3.5H14.5" stroke="#3b7fd0" stroke-width="1.3"/><path d="M7.5 1.0L5 3.5L7.5 6.0M12.5 1.0L15 3.5L12.5 6.0" stroke="#3b7fd0" stroke-width="1.3" fill="none"/><path d="M3.500 8.200H7M8.500 8.200H12M13.500 8.200H17" stroke="#e8323a" stroke-width="1.300"/><path d="M2 13.2H18M2.7 11.399999999999999V17.2M7.5 11.399999999999999V17.2M12.5 11.399999999999999V17.2M17.3 11.399999999999999V17.2" stroke="#e8323a" stroke-width="1.15" fill="none"/></svg>
<svg class="a" style="left:769px;top:73px" width="20" height="20" viewBox="0 0 20 20"><ellipse cx="9" cy="5.500" rx="1.700" ry="2.800" fill="none" stroke="#2f8fe8" stroke-width="1.300"/><path d="M17 3.500V8.500" stroke="#2f8fe8" stroke-width="1.300"/><path d="M2 13.2H18M2.7 11.399999999999999V17.2M8.5 11.399999999999999V17.2M17.3 11.399999999999999V17.2" stroke="#2f8fe8" stroke-width="1.15" fill="none"/></svg>
<svg class="a" style="left:794px;top:73px" width="20" height="20" viewBox="0 0 20 20"><path d="M4 7.700H7M13.500 7.700H16" stroke="#e8323a" stroke-width="1.300"/><path d="M2 13.2H18M2.7 11.399999999999999V17.2M8.5 11.399999999999999V17.2M17.3 11.399999999999999V17.2" stroke="#e8323a" stroke-width="1.15" fill="none"/><g transform="translate(13.5 6) rotate(30)"><rect x="-1.3" y="-5.500" width="2.600" height="7" fill="#f3d86a" stroke="#2f66a8" stroke-width=".6"/><rect x="-1.300" y="-7" width="2.600" height="2" fill="#d8302c"/><path d="M-1.300 1.500L0 4.200 1.300 1.500z" fill="#2f66a8"/></g></svg>
<svg class="a" style="left:819px;top:73px" width="20" height="20" viewBox="0 0 20 20"><path d="M4 4L6.500 2V8.500" stroke="#e8323a" stroke-width="1.400" fill="none"/><path d="M4 8.200H7M11 8.200H15" stroke="#2f8fe8" stroke-width="1.200"/><path d="M2 13.2H18M2.7 11.399999999999999V17.2M9 11.399999999999999V17.2M17.3 11.399999999999999V17.2" stroke="#2f8fe8" stroke-width="1.15" fill="none"/><path d="M9.500 8L17 16M16.500 8.500L9 16.500" stroke="#e03a2c" stroke-width="1.200" stroke-linecap="round"/></svg>
<svg class="a" style="left:844px;top:73px" width="20" height="20" viewBox="0 0 20 20"><path d="M4 8.200H8M12 8.200H16" stroke="#2f8fe8" stroke-width="1.200"/><path d="M2 13.2H18M2.7 11.399999999999999V17.2M17.3 11.399999999999999V17.2" stroke="#2f8fe8" stroke-width="1.15" fill="none"/><path d="M4.500 4.500L17 16M17 4L4 16.500" stroke="#e8322c" stroke-width="1.300" stroke-linecap="round"/></svg>
<div class="ln" style="left:871px;top:71px;width:1px;height:24px"></div>
<svg class="a" style="left:876px;top:73.5px" width="20" height="20" viewBox="0 0 20 20"><circle cx="10" cy="10" r="6.600" fill="url(#gBall)" stroke="#d0d4d8" stroke-width=".6"/><path d="M6 6L10.500 10.500" stroke="#2f7fd8" stroke-width="1.200"/><path d="M5.500 8.500V5.500H8.500" stroke="#2f7fd8" stroke-width="1.200" fill="none"/></svg>
<svg class="a" style="left:901px;top:73.5px" width="20" height="20" viewBox="0 0 20 20"><circle cx="10" cy="10" r="6.600" fill="url(#gBall)" stroke="#d0d4d8" stroke-width=".6"/><path d="M6 6L14 14" stroke="#2f7fd8" stroke-width="1.200"/><path d="M5.500 8.500V5.500H8.500M14.500 11.500V14.500H11.500" stroke="#2f7fd8" stroke-width="1.200" fill="none"/></svg>
<svg class="a" style="left:927px;top:73px" width="20" height="20" viewBox="0 0 20 20"><circle cx="13" cy="13" r="5.300" fill="url(#gBall2)" stroke="#b9bdc0" stroke-width=".8"/><path d="M3 10.500L10.500 3.500" stroke="#2f7fd8" stroke-width="1.200"/><path d="M2.700 7.500V11H6M7.500 3H11V6.500" stroke="#2f7fd8" stroke-width="1.200" fill="none"/></svg>
<div class="ln" style="left:954px;top:71px;width:1px;height:24px"></div>
<svg class="a" style="left:960px;top:73px" width="20" height="20" viewBox="0 0 20 20"><path d="M11.500 3.500L3 10L13.500 17.500M9 5.500L10.500 3M9.500 14.500L12 9" stroke="#2f8fe8" stroke-width="1.200" fill="none"/><path d="M12.500 4.500H17.500M12.500 7H17.500" stroke="#2f8fe8" stroke-width="1.300"/></svg>
<svg class="a" style="left:985px;top:73px" width="20" height="20" viewBox="0 0 20 20"><path d="M11.500 3.500L3 10L13.500 17.500M9 5.500L10.500 3M9.500 14.500L12 9" stroke="#2f8fe8" stroke-width="1.200" fill="none"/><path d="M12.500 4.500H17.500M12.500 7H17.500" stroke="#2f8fe8" stroke-width="1.300"/><path d="M2.0 3.5H9.5" stroke="#3b6fb0" stroke-width="1.2"/><path d="M4.0 1.0L1.5 3.5L4.0 6.0M7.5 1.0L10 3.5L7.5 6.0" stroke="#3b6fb0" stroke-width="1.2" fill="none"/></svg>
<svg class="a" style="left:1010px;top:73px" width="20" height="20" viewBox="0 0 20 20"><path d="M11.500 3.500L3 10L13.500 17.500M9 5.500L10.500 3M9.500 14.500L12 9" stroke="#2f8fe8" stroke-width="1.200" fill="none"/><path d="M12.500 4.500H17.500M12.500 7H17.500" stroke="#2f8fe8" stroke-width="1.300"/><path d="M6.500 4.500L17 14.500M16 4L6 15" stroke="#d43a2c" stroke-width="1.600" stroke-linecap="round"/></svg>
<div class="ln" style="left:1037px;top:71px;width:1px;height:24px"></div>
<svg class="a" style="left:1043px;top:73px" width="20" height="20" viewBox="0 0 20 20"><path d="M2.500 10.500H18M11.500 7.500H18" stroke="#2f8fe8" stroke-width="1.300"/><path d="M3.500 10.500L8 16.500L12.500 10.500" stroke="#2f8fe8" stroke-width="1.200" fill="none"/><path d="M2 17H7" stroke="#c6c9cc" stroke-width="1" stroke-dasharray="1 1"/></svg>
<svg class="a" style="left:1068px;top:73px" width="20" height="20" viewBox="0 0 20 20"><path d="M2.500 10.500H18M11.500 7.500H18" stroke="#2f8fe8" stroke-width="1.300"/><path d="M3.500 10.500L8 16.500L12.500 10.500" stroke="#2f8fe8" stroke-width="1.200" fill="none"/><path d="M2 17H7" stroke="#c6c9cc" stroke-width="1" stroke-dasharray="1 1"/><path d="M3.0 4.5H11.0" stroke="#3b6fb0" stroke-width="1.2"/><path d="M5.0 2.0L2.5 4.5L5.0 7.0M9.0 2.0L11.5 4.5L9.0 7.0" stroke="#3b6fb0" stroke-width="1.2" fill="none"/></svg>
<svg class="a" style="left:1093px;top:73px" width="20" height="20" viewBox="0 0 20 20"><path d="M2.500 10.500H18M11.500 7.500H18" stroke="#2f8fe8" stroke-width="1.300"/><path d="M3.500 10.500L8 16.500L12.500 10.500" stroke="#2f8fe8" stroke-width="1.200" fill="none"/><path d="M2 17H7" stroke="#c6c9cc" stroke-width="1" stroke-dasharray="1 1"/><path d="M3 5.500L13.500 15M13 5L3.500 15.500" stroke="#d43a2c" stroke-width="1.600" stroke-linecap="round"/></svg>
<div class="ln" style="left:1120px;top:71px;width:1px;height:24px"></div>
<svg class="a" style="left:1126px;top:73px" width="20" height="20" viewBox="0 0 20 20"><text x="2" y="17.5" font-family="Liberation Serif,serif" font-size="19" fill="#9a9c9e">A</text><rect x="11.5" y="11" width="7" height="7" fill="url(#gList)"/><path d="M13.0 12.8h4.5M13.0 14.6h4.5M13.0 16.4h4.5" stroke="#eef2f5" stroke-width="1"/></svg>
<svg class="a" style="left:1151px;top:73px" width="20" height="20" viewBox="0 0 20 20"><text x="2.5" y="17.5" font-family="Liberation Serif,serif" font-size="19" fill="#9a9c9e">A</text><text x="15" y="9" font-family="Liberation Sans,sans-serif" font-size="7.500" fill="#b9bcbe">1</text></svg>
<svg class="a" style="left:1176px;top:73px" width="20" height="20" viewBox="0 0 20 20"><text x="3" y="17.5" font-family="Liberation Serif,serif" font-size="19" fill="#9a9c9e">A</text></svg>
<svg class="a" style="left:1201.5px;top:73px" width="20" height="20" viewBox="0 0 20 20"><text x="2" y="17.5" font-family="Liberation Serif,serif" font-size="19" fill="#9a9c9e">A</text><g transform="translate(14 8) rotate(30)"><rect x="-1.300" y="-6" width="2.600" height="10" fill="#2f66a8"/><path d="M-.3 -5V3" stroke="#cfe0f0" stroke-width=".8"/></g></svg>
<svg class="a" style="left:1226px;top:73px" width="20" height="20" viewBox="0 0 20 20"><text x="2" y="17.5" font-family="Liberation Serif,serif" font-size="19" fill="#9a9c9e">A</text><g transform="translate(14 8) rotate(30)"><rect x="-1.3" y="-5.500" width="2.600" height="7" fill="#f3d86a" stroke="#2f66a8" stroke-width=".6"/><rect x="-1.300" y="-7" width="2.600" height="2" fill="#d8302c"/><path d="M-1.300 1.500L0 4.200 1.300 1.500z" fill="#2f66a8"/></g></svg>
<svg class="a" style="left:1251px;top:73px" width="20" height="20" viewBox="0 0 20 20"><text x="4.5" y="17.5" font-family="Liberation Serif,serif" font-size="15" fill="#9a9c9e">A</text><path d="M5.5 4.5H14.5" stroke="#3b7fd0" stroke-width="1.2"/><path d="M7.5 2.0L5 4.5L7.5 7.0M12.5 2.0L15 4.5L12.5 7.0" stroke="#3b7fd0" stroke-width="1.2" fill="none"/></svg>
<svg class="a" style="left:1275.5px;top:73px" width="20" height="20" viewBox="0 0 20 20"><text x="3" y="17.5" font-family="Liberation Serif,serif" font-size="19" fill="#9a9c9e">A</text><path d="M3.500 3.500C7 6 12 11 15.500 15.500M17 3C12 6.500 8 11 4.500 16" stroke="#c83a2c" stroke-width="1.500" fill="none" stroke-linecap="round"/></svg>
<div class="ln" style="left:1303px;top:71px;width:1px;height:24px"></div>
<svg class="a" style="left:1308px;top:73px" width="20" height="20" viewBox="0 0 20 20"><text x="4.800" y="17.800" font-family="Liberation Serif,serif" font-size="16.500" font-weight="bold" fill="#2f8fe8">A</text><path d="M3.500 3V6.500M3.500 3H7M4.500 4L8.500 10" stroke="#2f8fe8" stroke-width="1.200" fill="none" stroke-dasharray="3.500 1"/></svg>
<div class="ln" style="left:0;top:96px;width:1336px;height:1px;background:#6a6c6c"></div>
</div>

<!-- LEFT PANEL -->
<div id="leftp">
<div class="a" style="left:0;top:97px;width:1px;height:540px;background:#7a7a78"></div>
<div class="a" style="left:6px;top:102px;width:1px;height:535px;background:#6c6a66"></div>
<div class="a" style="left:0;top:97px;width:249px;height:1px;background:#1f262d"></div>
<div class="a" style="left:248px;top:97px;width:1px;height:540px;background:#1f262d"></div>
<div class="a" style="left:249.500px;top:97px;width:1.500px;height:540px;background:#737069"></div>
<div class="a" style="left:6px;top:102px;width:237px;height:1px;background:#6c6a66"></div>
<div class="a" style="left:242px;top:102px;width:1px;height:535px;background:#6c6a66"></div>
</div>

<!-- DIALOG -->
<div id="dlg">
<div class="a" style="left:294px;top:100px;width:748px;height:540px;background:#2d3c4b;border:1px solid #8d8d8d;border-right-color:#a9acae"></div>
<div class="a" style="left:295px;top:101px;width:746px;height:30px;background:#fff"></div>
<svg class="a" style="left:303px;top:107px" width="16" height="16" viewBox="0 0 16 16"><defs><linearGradient id="lgP2" x1="0" y1="1" x2="1" y2="0"><stop offset="0" stop-color="#8a2c83"/><stop offset="1" stop-color="#a94ba2"/></linearGradient><linearGradient id="lgD2" x1="0" y1="0" x2="1" y2="0"><stop offset="0" stop-color="#ffffff"/><stop offset=".35" stop-color="#c9c4c8"/><stop offset=".6" stop-color="#ffffff"/><stop offset="1" stop-color="#f4eef3"/></linearGradient></defs><rect width="16" height="16" fill="url(#lgP2)"/><path d="M2.100 12.800L13 12.800L16 16H5.300z" fill="#6a2266" opacity=".7"/><path d="M13.800 7.800L16 10V16L13 12.800z" fill="#6a2266" opacity=".55"/><rect x=".5" y=".5" width="15" height="15" fill="none" stroke="#9a3f93" stroke-width="1"/><path d="M2.900 2.800H9.300C12.400 2.800 13.900 4.900 13.900 7.800S12.400 12.800 9.300 12.800H2z" fill="url(#lgD2)"/><path d="M6.300 5.600H8.800C10 5.600 10.500 6.600 10.500 7.800S10 10 8.800 10H6z" fill="#7a2a75"/></svg>
<div class="t" style="left:324px;top:108px;font-family:'Liberation Sans',sans-serif;font-size:12.300px;color:#000;letter-spacing:-.12px">Bibliothek - Ansichtsfenster</div>
<div class="a" style="left:921px;top:115px;width:11px;height:1px;background:#c8c8c8"></div>
<div class="a" style="left:967px;top:110px;width:10px;height:10px;border:1px solid #1a1a1a"></div>
<svg class="a" style="left:1012px;top:109px" width="12" height="12" viewBox="0 0 12 12"><path d="M1 1L11 11M11 1L1 11" stroke="#1a1a1a" stroke-width="1.100"/></svg>
<div class="grp" style="left:306px;top:140px;width:728px;height:32px;border-color:#6c6a66"></div>
<div class="grp" style="left:311px;top:146px;width:714px;height:18px;border-color:#6c6a66"></div>
<div class="t" style="left:317px;top:147px;font-size:11.500px;letter-spacing:.28px;color:#d3d6d8">C:\DIETRICHS22.02\PLANBIB\Legenden\DHP_AG_1</div>
<div class="ln" style="left:306px;top:171px;width:1px;height:262px;background:#6c6a66"></div>
<div class="ln" style="left:306px;top:171px;width:357px;height:1px;background:#6c6a66"></div>
<div class="ln" style="left:662px;top:171px;width:1px;height:402px;background:#6c6a66"></div>
<div class="grp" style="left:313px;top:175px;width:343px;height:250px;border-color:#6c6a66;overflow:hidden" id="treebox">
<svg class="a" style="left:79px;top:1px" width="17" height="15" viewBox="0 0 17 15"><defs><linearGradient id="fg" x1="0" y1="0" x2="1" y2="1"><stop offset="0" stop-color="#fffbe0"/><stop offset=".5" stop-color="#fde88a"/><stop offset="1" stop-color="#fbc93a"/></linearGradient></defs><path d="M1.500 3V1.400Q1.500 .5 2.400 .5H6.600Q7.500 .5 7.500 1.400V3z" fill="#fff8d8" stroke="#a0602a" stroke-width="1"/><rect x=".5" y="2.500" width="15" height="11" rx=".7" fill="url(#fg)" stroke="#a0602a" stroke-width="1"/><path d="M2.500 1.500H6.500" stroke="#fffef4" stroke-width="1"/></svg>
<div class="t tree" style="left:100px;top:1.5px;color:#d3d6d8">Fassade</div>
<div class="a" style="left:63px;top:20px;width:11px;height:11px;border:1px solid #6a6c6c"></div><div class="a" style="left:65px;top:25px;width:7px;height:1px;background:#b85a1a"></div><div class="a" style="left:68px;top:22px;width:1px;height:7px;background:#b85a1a"></div>
<svg class="a" style="left:79px;top:18px" width="17" height="15" viewBox="0 0 17 15"><defs><linearGradient id="fg" x1="0" y1="0" x2="1" y2="1"><stop offset="0" stop-color="#fffbe0"/><stop offset=".5" stop-color="#fde88a"/><stop offset="1" stop-color="#fbc93a"/></linearGradient></defs><path d="M1.500 3V1.400Q1.500 .5 2.400 .5H6.600Q7.500 .5 7.500 1.400V3z" fill="#fff8d8" stroke="#a0602a" stroke-width="1"/><rect x=".5" y="2.500" width="15" height="11" rx=".7" fill="url(#fg)" stroke="#a0602a" stroke-width="1"/><path d="M2.500 1.500H6.500" stroke="#fffef4" stroke-width="1"/></svg>
<div class="t tree" style="left:100px;top:18.5px;color:#d3d6d8">Fenster</div>
<div class="a" style="left:63px;top:37px;width:11px;height:11px;border:1px solid #6a6c6c"></div><div class="a" style="left:65px;top:42px;width:7px;height:1px;background:#b85a1a"></div><div class="a" style="left:68px;top:39px;width:1px;height:7px;background:#b85a1a"></div>
<svg class="a" style="left:79px;top:35px" width="17" height="15" viewBox="0 0 17 15"><defs><linearGradient id="fg" x1="0" y1="0" x2="1" y2="1"><stop offset="0" stop-color="#fffbe0"/><stop offset=".5" stop-color="#fde88a"/><stop offset="1" stop-color="#fbc93a"/></linearGradient></defs><path d="M1.500 3V1.400Q1.500 .5 2.400 .5H6.600Q7.500 .5 7.500 1.400V3z" fill="#fff8d8" stroke="#a0602a" stroke-width="1"/><rect x=".5" y="2.500" width="15" height="11" rx=".7" fill="url(#fg)" stroke="#a0602a" stroke-width="1"/><path d="M2.500 1.500H6.500" stroke="#fffef4" stroke-width="1"/></svg>
<div class="t tree" style="left:100px;top:35.5px;color:#d3d6d8">Heizung</div>
<div class="a" style="left:63px;top:54px;width:11px;height:11px;border:1px solid #6a6c6c"></div><div class="a" style="left:65px;top:59px;width:7px;height:1px;background:#b85a1a"></div><div class="a" style="left:68px;top:56px;width:1px;height:7px;background:#b85a1a"></div>
<svg class="a" style="left:79px;top:52px" width="17" height="15" viewBox="0 0 17 15"><defs><linearGradient id="fg" x1="0" y1="0" x2="1" y2="1"><stop offset="0" stop-color="#fffbe0"/><stop offset=".5" stop-color="#fde88a"/><stop offset="1" stop-color="#fbc93a"/></linearGradient></defs><path d="M1.500 3V1.400Q1.500 .5 2.400 .5H6.600Q7.500 .5 7.500 1.400V3z" fill="#fff8d8" stroke="#a0602a" stroke-width="1"/><rect x=".5" y="2.500" width="15" height="11" rx=".7" fill="url(#fg)" stroke="#a0602a" stroke-width="1"/><path d="M2.500 1.500H6.500" stroke="#fffef4" stroke-width="1"/></svg>
<div class="t tree" style="left:100px;top:52.5px;color:#d3d6d8">Küche</div>
<div class="a" style="left:63px;top:71px;width:11px;height:11px;border:1px solid #6a6c6c"></div><div class="a" style="left:65px;top:76px;width:7px;height:1px;background:#e8e8e8"></div>
<svg class="a" style="left:79px;top:69px" width="17" height="15" viewBox="0 0 17 15"><defs><linearGradient id="fg" x1="0" y1="0" x2="1" y2="1"><stop offset="0" stop-color="#fffbe0"/><stop offset=".5" stop-color="#fde88a"/><stop offset="1" stop-color="#fbc93a"/></linearGradient></defs><path d="M1.500 3V1.400Q1.500 .5 2.400 .5H6.600Q7.500 .5 7.500 1.400V3z" fill="#fff8d8" stroke="#a0602a" stroke-width="1"/><rect x=".5" y="2.500" width="15" height="11" rx=".7" fill="url(#fg)" stroke="#a0602a" stroke-width="1"/><path d="M2.500 1.500H6.500" stroke="#fffef4" stroke-width="1"/></svg>
<div class="t tree" style="left:100px;top:69.5px;color:#d3d6d8">Legenden</div>
<div class="a" style="left:82px;top:88px;width:11px;height:11px;border:1px solid #6a6c6c"></div><div class="a" style="left:84px;top:93px;width:7px;height:1px;background:#b85a1a"></div><div class="a" style="left:87px;top:90px;width:1px;height:7px;background:#b85a1a"></div>
<svg class="a" style="left:98px;top:86px" width="17" height="15" viewBox="0 0 17 15"><defs><linearGradient id="fg" x1="0" y1="0" x2="1" y2="1"><stop offset="0" stop-color="#fffbe0"/><stop offset=".5" stop-color="#fde88a"/><stop offset="1" stop-color="#fbc93a"/></linearGradient></defs><path d="M1.500 3V1.400Q1.500 .5 2.400 .5H6.600Q7.500 .5 7.500 1.400V3z" fill="#fff8d8" stroke="#a0602a" stroke-width="1"/><rect x=".5" y="2.500" width="15" height="11" rx=".7" fill="url(#fg)" stroke="#a0602a" stroke-width="1"/><path d="M2.500 1.500H6.500" stroke="#fffef4" stroke-width="1"/></svg>
<div class="t tree" style="left:119px;top:86.5px;color:#d3d6d8">Test</div>
<div class="a" style="left:0;top:102px;width:324px;height:17px;background:#a14b12"></div>
<svg class="a" style="left:99px;top:103px" width="16" height="16" viewBox="0 0 16 16"><defs><radialGradient id="vb" cx=".4" cy=".35" r=".7"><stop offset="0" stop-color="#d4e6f4"/><stop offset="1" stop-color="#7fb0d8"/></radialGradient><linearGradient id="vr" x1="0" y1="0" x2="1" y2="1"><stop offset="0" stop-color="#f4a0a8"/><stop offset="1" stop-color="#d8202c"/></linearGradient></defs><path d="M.6 5V.6H14.200V9.500" stroke="#0a0a0a" stroke-width="1.100" fill="none"/><path d="M1.200 1.200H5L1.200 5.500z" fill="#2fc04a"/><rect x="1.200" y="1.200" width="3" height="2.500" fill="#2fc04a"/><rect x="9.300" y="2" width="4.300" height="6.500" fill="url(#vr)"/><circle cx="5.600" cy="7.600" r="3.900" fill="#0a0a0a"/><circle cx="5.600" cy="7.600" r="3.300" fill="url(#vb)"/><path d="M1 14.300L14 11.300" stroke="#0a0a0a" stroke-width="1" stroke-dasharray="3.500 .8"/></svg>
<div class="t tree" style="left:119px;top:103.5px;color:#f0f0f0;letter-spacing:.4px">DHP_AG_1</div>
<svg class="a" style="left:99px;top:120px" width="16" height="16" viewBox="0 0 16 16"><defs><radialGradient id="vb" cx=".4" cy=".35" r=".7"><stop offset="0" stop-color="#d4e6f4"/><stop offset="1" stop-color="#7fb0d8"/></radialGradient><linearGradient id="vr" x1="0" y1="0" x2="1" y2="1"><stop offset="0" stop-color="#f4a0a8"/><stop offset="1" stop-color="#d8202c"/></linearGradient></defs><path d="M.6 5V.6H14.200V9.500" stroke="#0a0a0a" stroke-width="1.100" fill="none"/><path d="M1.200 1.200H5L1.200 5.500z" fill="#2fc04a"/><rect x="1.200" y="1.200" width="3" height="2.500" fill="#2fc04a"/><rect x="9.300" y="2" width="4.300" height="6.500" fill="url(#vr)"/><circle cx="5.600" cy="7.600" r="3.900" fill="#0a0a0a"/><circle cx="5.600" cy="7.600" r="3.300" fill="url(#vb)"/><path d="M1 14.300L14 11.300" stroke="#0a0a0a" stroke-width="1" stroke-dasharray="3.500 .8"/></svg>
<div class="t tree" style="left:119px;top:120.5px;color:#d3d6d8;letter-spacing:.4px">DHP_AG_2</div>
<svg class="a" style="left:99px;top:137px" width="16" height="16" viewBox="0 0 16 16"><defs><radialGradient id="vb" cx=".4" cy=".35" r=".7"><stop offset="0" stop-color="#d4e6f4"/><stop offset="1" stop-color="#7fb0d8"/></radialGradient><linearGradient id="vr" x1="0" y1="0" x2="1" y2="1"><stop offset="0" stop-color="#f4a0a8"/><stop offset="1" stop-color="#d8202c"/></linearGradient></defs><path d="M.6 5V.6H14.200V9.500" stroke="#0a0a0a" stroke-width="1.100" fill="none"/><path d="M1.200 1.200H5L1.200 5.500z" fill="#2fc04a"/><rect x="1.200" y="1.200" width="3" height="2.500" fill="#2fc04a"/><rect x="9.300" y="2" width="4.300" height="6.500" fill="url(#vr)"/><circle cx="5.600" cy="7.600" r="3.900" fill="#0a0a0a"/><circle cx="5.600" cy="7.600" r="3.300" fill="url(#vb)"/><path d="M1 14.300L14 11.300" stroke="#0a0a0a" stroke-width="1" stroke-dasharray="3.500 .8"/></svg>
<div class="t tree" style="left:119px;top:137.5px;color:#d3d6d8;letter-spacing:.4px">DHP_AG_3</div>
<svg class="a" style="left:99px;top:154px" width="16" height="16" viewBox="0 0 16 16"><defs><radialGradient id="vb" cx=".4" cy=".35" r=".7"><stop offset="0" stop-color="#d4e6f4"/><stop offset="1" stop-color="#7fb0d8"/></radialGradient><linearGradient id="vr" x1="0" y1="0" x2="1" y2="1"><stop offset="0" stop-color="#f4a0a8"/><stop offset="1" stop-color="#d8202c"/></linearGradient></defs><path d="M.6 5V.6H14.200V9.500" stroke="#0a0a0a" stroke-width="1.100" fill="none"/><path d="M1.200 1.200H5L1.200 5.500z" fill="#2fc04a"/><rect x="1.200" y="1.200" width="3" height="2.500" fill="#2fc04a"/><rect x="9.300" y="2" width="4.300" height="6.500" fill="url(#vr)"/><circle cx="5.600" cy="7.600" r="3.900" fill="#0a0a0a"/><circle cx="5.600" cy="7.600" r="3.300" fill="url(#vb)"/><path d="M1 14.300L14 11.300" stroke="#0a0a0a" stroke-width="1" stroke-dasharray="3.500 .8"/></svg>
<div class="t tree" style="left:119px;top:154.5px;color:#d3d6d8;letter-spacing:.4px">DHP_AG_4</div>
<svg class="a" style="left:99px;top:171px" width="16" height="16" viewBox="0 0 16 16"><defs><radialGradient id="vb" cx=".4" cy=".35" r=".7"><stop offset="0" stop-color="#d4e6f4"/><stop offset="1" stop-color="#7fb0d8"/></radialGradient><linearGradient id="vr" x1="0" y1="0" x2="1" y2="1"><stop offset="0" stop-color="#f4a0a8"/><stop offset="1" stop-color="#d8202c"/></linearGradient></defs><path d="M.6 5V.6H14.200V9.500" stroke="#0a0a0a" stroke-width="1.100" fill="none"/><path d="M1.200 1.200H5L1.200 5.500z" fill="#2fc04a"/><rect x="1.200" y="1.200" width="3" height="2.500" fill="#2fc04a"/><rect x="9.300" y="2" width="4.300" height="6.500" fill="url(#vr)"/><circle cx="5.600" cy="7.600" r="3.900" fill="#0a0a0a"/><circle cx="5.600" cy="7.600" r="3.300" fill="url(#vb)"/><path d="M1 14.300L14 11.300" stroke="#0a0a0a" stroke-width="1" stroke-dasharray="3.500 .8"/></svg>
<div class="t tree" style="left:119px;top:171.5px;color:#d3d6d8;letter-spacing:.4px">DHP_AG_A4</div>
<svg class="a" style="left:99px;top:188px" width="16" height="16" viewBox="0 0 16 16"><defs><radialGradient id="vb" cx=".4" cy=".35" r=".7"><stop offset="0" stop-color="#d4e6f4"/><stop offset="1" stop-color="#7fb0d8"/></radialGradient><linearGradient id="vr" x1="0" y1="0" x2="1" y2="1"><stop offset="0" stop-color="#f4a0a8"/><stop offset="1" stop-color="#d8202c"/></linearGradient></defs><path d="M.6 5V.6H14.200V9.500" stroke="#0a0a0a" stroke-width="1.100" fill="none"/><path d="M1.200 1.200H5L1.200 5.500z" fill="#2fc04a"/><rect x="1.200" y="1.200" width="3" height="2.500" fill="#2fc04a"/><rect x="9.300" y="2" width="4.300" height="6.500" fill="url(#vr)"/><circle cx="5.600" cy="7.600" r="3.900" fill="#0a0a0a"/><circle cx="5.600" cy="7.600" r="3.300" fill="url(#vb)"/><path d="M1 14.300L14 11.300" stroke="#0a0a0a" stroke-width="1" stroke-dasharray="3.500 .8"/></svg>
<div class="t tree" style="left:119px;top:188.5px;color:#d3d6d8">Logo</div>
<div class="a" style="left:63px;top:207px;width:11px;height:11px;border:1px solid #6a6c6c"></div><div class="a" style="left:65px;top:212px;width:7px;height:1px;background:#b85a1a"></div><div class="a" style="left:68px;top:209px;width:1px;height:7px;background:#b85a1a"></div>
<svg class="a" style="left:79px;top:205px" width="17" height="15" viewBox="0 0 17 15"><defs><linearGradient id="fg" x1="0" y1="0" x2="1" y2="1"><stop offset="0" stop-color="#fffbe0"/><stop offset=".5" stop-color="#fde88a"/><stop offset="1" stop-color="#fbc93a"/></linearGradient></defs><path d="M1.500 3V1.400Q1.500 .5 2.400 .5H6.600Q7.500 .5 7.500 1.400V3z" fill="#fff8d8" stroke="#a0602a" stroke-width="1"/><rect x=".5" y="2.500" width="15" height="11" rx=".7" fill="url(#fg)" stroke="#a0602a" stroke-width="1"/><path d="M2.500 1.500H6.500" stroke="#fffef4" stroke-width="1"/></svg>
<div class="t tree" style="left:100px;top:205.5px;color:#d3d6d8">Lüftung</div>
<div class="a" style="left:63px;top:224px;width:11px;height:11px;border:1px solid #6a6c6c"></div><div class="a" style="left:65px;top:229px;width:7px;height:1px;background:#b85a1a"></div><div class="a" style="left:68px;top:226px;width:1px;height:7px;background:#b85a1a"></div>
<svg class="a" style="left:79px;top:222px" width="17" height="15" viewBox="0 0 17 15"><defs><linearGradient id="fg" x1="0" y1="0" x2="1" y2="1"><stop offset="0" stop-color="#fffbe0"/><stop offset=".5" stop-color="#fde88a"/><stop offset="1" stop-color="#fbc93a"/></linearGradient></defs><path d="M1.500 3V1.400Q1.500 .5 2.400 .5H6.600Q7.500 .5 7.500 1.400V3z" fill="#fff8d8" stroke="#a0602a" stroke-width="1"/><rect x=".5" y="2.500" width="15" height="11" rx=".7" fill="url(#fg)" stroke="#a0602a" stroke-width="1"/><path d="M2.500 1.500H6.500" stroke="#fffef4" stroke-width="1"/></svg>
<div class="t tree" style="left:100px;top:222.5px;color:#d3d6d8">Massstabsleiste (Ansichtsfenster)</div>
<div class="a" style="left:63px;top:241px;width:11px;height:11px;border:1px solid #6a6c6c"></div><div class="a" style="left:65px;top:246px;width:7px;height:1px;background:#b85a1a"></div><div class="a" style="left:68px;top:243px;width:1px;height:7px;background:#b85a1a"></div>
<svg class="a" style="left:79px;top:239px" width="17" height="15" viewBox="0 0 17 15"><defs><linearGradient id="fg" x1="0" y1="0" x2="1" y2="1"><stop offset="0" stop-color="#fffbe0"/><stop offset=".5" stop-color="#fde88a"/><stop offset="1" stop-color="#fbc93a"/></linearGradient></defs><path d="M1.500 3V1.400Q1.500 .5 2.400 .5H6.600Q7.500 .5 7.500 1.400V3z" fill="#fff8d8" stroke="#a0602a" stroke-width="1"/><rect x=".5" y="2.500" width="15" height="11" rx=".7" fill="url(#fg)" stroke="#a0602a" stroke-width="1"/><path d="M2.500 1.500H6.500" stroke="#fffef4" stroke-width="1"/></svg>
<div class="t tree" style="left:100px;top:239.5px;color:#d3d6d8">Planzeichen</div>
<div class="a" style="left:324px;top:0;width:17px;height:248px;background:#2d3c4b"></div>
<div class="a" style="left:324px;top:17px;width:17px;height:214px;background:#384d5e"></div>
<div class="a" style="left:325px;top:102px;width:15px;height:31px;background:#243240"></div>
<svg class="a" style="left:327px;top:5px" width="12" height="8" viewBox="0 0 12 8"><path d="M0 7L6 .5L12 7z" fill="#243240"/></svg>
<svg class="a" style="left:327px;top:236px" width="12" height="8" viewBox="0 0 12 8"><path d="M0 1L6 7.500L12 1z" fill="#243240"/></svg>
</div>
<div class="ln" style="left:304px;top:433px;width:1px;height:140px;background:#6c6a66"></div>
<div class="ln" style="left:304px;top:433px;width:7px;height:1px;background:#6c6a66"></div>
<div class="ln" style="left:656px;top:433px;width:7px;height:1px;background:#6c6a66"></div>
<div class="ln" style="left:304px;top:526px;width:359px;height:1px;background:#6c6a66"></div>
<div class="ln" style="left:304px;top:572px;width:359px;height:1px;background:#6c6a66"></div>
<div class="t" style="left:311px;top:433px;font-size:11.400px">Verzeichnis:</div>
<div class="btn" style="left:311px;top:451px;width:168px;height:23px;line-height:22.500px;font-size:11.400px">Neu</div>
<div class="btn" style="left:486px;top:451px;width:168px;height:23px;line-height:22.500px;font-size:11.400px;color:#7f888f">Löschen</div>
<div class="t" style="left:314px;top:480px;font-size:11.400px">Ansichtsfenster:</div>
<div class="btn" style="left:311px;top:498px;width:168px;height:23px;line-height:22.500px;font-size:11.400px">Neu</div>
<div class="btn" style="left:486px;top:498px;width:168px;height:23px;line-height:22.500px;font-size:11.400px">Löschen</div>
<div class="t" style="left:314px;top:532px;font-size:11.400px">Layergruppe für alle Layer</div>
<div class="fld" style="left:314px;top:549px;width:340px;height:18px"></div>
<div class="a" style="left:637px;top:552px;width:1px;height:12px;background:#c8cacb"></div>
<svg class="a" style="left:641px;top:553px" width="10" height="10" viewBox="0 0 10 10"><path d="M2.800 .5H7.200V4.500H9.800L5 9.500L.2 4.500H2.800z" fill="#5f78d0"/></svg>
<div class="btn" style="left:313px;top:610px;width:88px;height:23px;line-height:22.500px;font-size:11.400px">Lesen</div>
<div class="btn" style="left:929px;top:610px;width:88px;height:23px;line-height:22.500px;font-size:11.400px">Ende</div>
<svg class="a" style="left:1022px;top:622px" width="15" height="15" viewBox="0 0 15 15"><path d="M1 14L14 1M4.500 14L14 4.500M8 14L14 8M11.500 14L14 11.500" stroke="#c8cbce" stroke-width="1.100"/></svg>
<div class="a" style="left:668px;top:176px;width:359px;height:399px;background:#e1e5e8;border-left:1px solid #f4f5f6;border-top:1px solid #f4f5f6" id="pv"></div>
<svg class="a" style="left:668px;top:176px;font-family:'Liberation Sans',sans-serif" width="359" height="399" viewBox="668 176 359 399"><rect x="698.500" y="242.500" width="298" height="265" fill="none" stroke="#0a0a0a" stroke-width="1"/><rect x="700.200" y="244.200" width="294.400" height="261.800" fill="none" stroke="#0a0a0a" stroke-width="1.500"/><path d="M700 253.3H994.5" stroke="#0a0a0a" stroke-width="1.25"/><path d="M700 262.3H994.5" stroke="#0a0a0a" stroke-width="1.25"/><path d="M700 271.4H994.5" stroke="#0a0a0a" stroke-width="1.25"/><path d="M700 281.2H994.5" stroke="#0a0a0a" stroke-width="1.25"/><path d="M700 290.4H994.5" stroke="#0a0a0a" stroke-width="1.25"/><path d="M700 299.6H994.5" stroke="#0a0a0a" stroke-width="1.25"/><path d="M700 308.5H994.5" stroke="#0a0a0a" stroke-width="1.25"/><path d="M700 318H994.5" stroke="#0a0a0a" stroke-width="1.25"/><path d="M718.3 244V318" stroke="#0a0a0a" stroke-width="1.25"/><path d="M756.2 244V318" stroke="#0a0a0a" stroke-width="1.25"/><path d="M967.5 244V318" stroke="#0a0a0a" stroke-width="1.25"/><text x="702.5" y="250.7" font-size="5" text-anchor="start" fill="#a8acb0" stroke="#a8acb0" stroke-width=".18">...</text><text x="721" y="250.7" font-size="5" text-anchor="start" fill="#a8acb0" stroke="#a8acb0" stroke-width=".18">...</text><text x="759.5" y="250.7" font-size="5" text-anchor="start" fill="#a8acb0" stroke="#a8acb0" stroke-width=".18">...</text><text x="970" y="250.7" font-size="5" text-anchor="start" fill="#a8acb0" stroke="#a8acb0" stroke-width=".18">...</text><text x="702.5" y="259.7" font-size="5" text-anchor="start" fill="#a8acb0" stroke="#a8acb0" stroke-width=".18">...</text><text x="721" y="259.7" font-size="5" text-anchor="start" fill="#a8acb0" stroke="#a8acb0" stroke-width=".18">...</text><text x="759.5" y="259.7" font-size="5" text-anchor="start" fill="#a8acb0" stroke="#a8acb0" stroke-width=".18">...</text><text x="970" y="259.7" font-size="5" text-anchor="start" fill="#a8acb0" stroke="#a8acb0" stroke-width=".18">...</text><text x="702.5" y="268.8" font-size="5" text-anchor="start" fill="#50545a" stroke="#50545a" stroke-width=".18">...</text><text x="721" y="268.8" font-size="5" text-anchor="start" fill="#50545a" stroke="#50545a" stroke-width=".18">...</text><text x="759.5" y="268.8" font-size="5" text-anchor="start" fill="#50545a" stroke="#50545a" stroke-width=".18">...</text><text x="970" y="268.8" font-size="5" text-anchor="start" fill="#50545a" stroke="#50545a" stroke-width=".18">...</text><text x="702.5" y="278.3" font-size="5" text-anchor="start" fill="#50545a" stroke="#50545a" stroke-width=".18">...</text><text x="721" y="278.3" font-size="5" text-anchor="start" fill="#50545a" stroke="#50545a" stroke-width=".18">...</text><text x="759.5" y="278.3" font-size="5" text-anchor="start" fill="#50545a" stroke="#50545a" stroke-width=".18">...</text><text x="970" y="278.3" font-size="5" text-anchor="start" fill="#50545a" stroke="#50545a" stroke-width=".18">...</text><text x="702.5" y="287.6" font-size="5" text-anchor="start" fill="#50545a" stroke="#50545a" stroke-width=".18">...</text><text x="721" y="287.6" font-size="5" text-anchor="start" fill="#50545a" stroke="#50545a" stroke-width=".18">...</text><text x="759.5" y="287.6" font-size="5" text-anchor="start" fill="#50545a" stroke="#50545a" stroke-width=".18">...</text><text x="970" y="287.6" font-size="5" text-anchor="start" fill="#50545a" stroke="#50545a" stroke-width=".18">...</text><text x="702.5" y="296.8" font-size="5" text-anchor="start" fill="#a8acb0" stroke="#a8acb0" stroke-width=".18">...</text><text x="721" y="296.8" font-size="5" text-anchor="start" fill="#a8acb0" stroke="#a8acb0" stroke-width=".18">...</text><text x="759.5" y="296.8" font-size="5" text-anchor="start" fill="#a8acb0" stroke="#a8acb0" stroke-width=".18">...</text><text x="970" y="296.8" font-size="5" text-anchor="start" fill="#a8acb0" stroke="#a8acb0" stroke-width=".18">...</text><text x="702.5" y="305.8" font-size="5" text-anchor="start" fill="#a8acb0" stroke="#a8acb0" stroke-width=".18">...</text><text x="721" y="305.8" font-size="5" text-anchor="start" fill="#a8acb0" stroke="#a8acb0" stroke-width=".18">...</text><text x="759.5" y="305.8" font-size="5" text-anchor="start" fill="#a8acb0" stroke="#a8acb0" stroke-width=".18">...</text><text x="970" y="305.8" font-size="5" text-anchor="start" fill="#a8acb0" stroke="#a8acb0" stroke-width=".18">...</text><text x="701.7" y="315.7" font-size="5.9" text-anchor="start" fill="#111" stroke="#111" stroke-width=".18">Ind.</text><text x="720" y="315.7" font-size="5.9" text-anchor="start" fill="#111" stroke="#111" stroke-width=".18">Datum</text><text x="758.5" y="315.7" font-size="5.9" text-anchor="start" fill="#111" stroke="#111" stroke-width=".18">Art der Änderung</text><text x="969.3" y="315.7" font-size="5.9" text-anchor="start" fill="#111" stroke="#111" stroke-width=".18">Name</text><text x="701.7" y="325" font-size="5.9" text-anchor="start" fill="#111" stroke="#111" stroke-width=".18">Kunde:</text><path d="M700 342.4H994.5" stroke="#0a0a0a" stroke-width="1.2"/><text x="701.7" y="349" font-size="5.9" text-anchor="start" fill="#111" stroke="#111" stroke-width=".18">Bauvorhaben</text><path d="M700 365.2H994.5" stroke="#0a0a0a" stroke-width="1.2"/><text x="701.7" y="372.7" font-size="5.9" text-anchor="start" fill="#111" stroke="#111" stroke-width=".18">Bauteil</text><text x="745.5" y="380.5" font-size="5" text-anchor="start" fill="#70747a" stroke="#70747a" stroke-width=".18">...</text><text x="745.5" y="395" font-size="5" text-anchor="start" fill="#50545a" stroke="#50545a" stroke-width=".18">...</text><path d="M700 401.3H994.5" stroke="#0a0a0a" stroke-width="1.2"/><path d="M775.5 401.3V436" stroke="#0a0a0a" stroke-width="1.2"/><path d="M815.4 401.3V436" stroke="#0a0a0a" stroke-width="1.2"/><path d="M867.5 401.3V436" stroke="#0a0a0a" stroke-width="1.2"/><path d="M919.6 401.3V506" stroke="#0a0a0a" stroke-width="1.3"/><path d="M775.5 412.7H919.6" stroke="#0a0a0a" stroke-width="1.2"/><path d="M775.5 424.3H919.6" stroke="#0a0a0a" stroke-width="1.2"/><path d="M700 436.1H994.5" stroke="#0a0a0a" stroke-width="1.3"/><text x="732" y="409.8" font-size="5.9" text-anchor="middle" fill="#111" stroke="#111" stroke-width=".18">Hierzu siehe Plan</text><text x="725.5" y="429" font-size="5" text-anchor="start" fill="#8a8e94" stroke="#8a8e94" stroke-width=".18">...</text><text x="841.5" y="409.8" font-size="5.9" text-anchor="middle" fill="#111" stroke="#111" stroke-width=".18">Name</text><text x="890.7" y="409.8" font-size="5.9" text-anchor="middle" fill="#111" stroke="#111" stroke-width=".18">Datum</text><text x="777" y="421" font-size="5.9" text-anchor="start" fill="#111" stroke="#111" stroke-width=".18">gezeichnet</text><text x="777" y="432.3" font-size="5.9" text-anchor="start" fill="#111" stroke="#111" stroke-width=".18">gesehen</text><text x="871" y="420.3" font-size="5.9" text-anchor="start" fill="#111" stroke="#111" stroke-width=".18">07.05.2021</text><text x="871" y="432.3" font-size="5" text-anchor="start" fill="#50545a" stroke="#50545a" stroke-width=".18">...</text><text x="936" y="419.3" font-size="5.9" text-anchor="start" fill="#111" stroke="#111" stroke-width=".18">1 :</text><text x="921.2" y="434" font-size="5.9" text-anchor="start" fill="#111" stroke="#111" stroke-width=".18">Maßstab</text><text x="952.6" y="457" font-size="5.65" text-anchor="start" fill="#111" stroke="#111" stroke-width=".18">Eigene Planvorlage erstellen</text><text x="921.2" y="468.7" font-size="5.9" text-anchor="start" fill="#111" stroke="#111" stroke-width=".18">Projekt Nr.</text><path d="M919.6 471.3H994.5" stroke="#0a0a0a" stroke-width="1.3"/><text x="952.6" y="493.7" font-size="5.9" text-anchor="start" fill="#111" stroke="#111" stroke-width=".18">003</text><text x="921.2" y="503.7" font-size="5.9" text-anchor="start" fill="#111" stroke="#111" stroke-width=".18">Plan Nr.</text><text x="707.3" y="481.7" font-size="9.35" text-anchor="start" fill="#111">3D CAD/CAM für den Holz- und Fertigbau</text><text x="707.3" y="490.4" font-size="9.35" text-anchor="start" fill="#111">Hauptstr. 37</text><text x="910" y="490.4" font-size="9.35" text-anchor="end" fill="#111">85579 Neubiberg</text><text x="707.3" y="499.7" font-size="9.35" text-anchor="start" fill="#111">Tel: 089/6144210</text><text x="910" y="499.7" font-size="9.35" text-anchor="end" fill="#111">Fax:089/61442144</text></svg>
</div>

<!-- MENUS -->
<div id="menus">
<div class="menu" style="left:1px;top:43px;width:132px;height:264px"><div class="mi" style="top:1px;width:128px"><span class="n" style="left:6.5px">1</span><span class="x " style="left:25px">Plan</span><span class="ar" style="left:117px"></span></div><div class="mi" style="top:17px;width:128px"><span class="n" style="left:6.5px">2</span><span class="x " style="left:25px">Einfügungen</span><span class="ar" style="left:117px"></span></div><div class="mi" style="top:33px;width:128px"><span class="n" style="left:6.5px">3</span><span class="x " style="left:25px">Vorlagen</span><span class="ar" style="left:117px"></span></div><div class="mi" style="top:49px;width:128px"><span class="n" style="left:6.5px">4</span><span class="x " style="left:25px">Planinfo</span></div><div class="mi" style="top:65px;width:128px;background:#a14b12"><span class="n" style="left:6.5px;color:#f2e8de">5</span><span class="x " style="left:25px;color:#ececec">Bibliotheken</span><span class="ar" style="left:117px"></span></div><div class="mi" style="top:81px;width:128px"><span class="n" style="left:6.5px">6</span><span class="x " style="left:25px">Vorgabewerte</span></div><div class="mi" style="top:97px;width:128px"><span class="n" style="left:6.5px">7</span><span class="x " style="left:25px">Einstellungen</span><span class="ar" style="left:117px"></span></div><div class="sep" style="left:1px;top:117px;width:126px"></div><div class="mi" style="top:122px;width:128px"><span class="n" style="left:6.5px">8</span></div><div class="mi" style="top:139px;width:128px"><span class="n" style="left:6.5px">9</span><span class="x " style="left:25px">Seite einrichten</span></div><div class="mi" style="top:155px;width:128px"><span class="n" style="left:6.5px">01</span><span class="x " style="left:25px">Ausgabe</span><span class="ar" style="left:117px"></span></div><div class="mi" style="top:171px;width:128px"><span class="n" style="left:6.5px">02</span></div><div class="mi" style="top:187px;width:128px"><span class="n" style="left:6.5px">03</span></div><div class="mi" style="top:203px;width:128px"><span class="n" style="left:6.5px">04</span><span class="x " style="left:25px">Import</span><span class="ar" style="left:117px"></span></div><div class="mi" style="top:219px;width:128px"><span class="n" style="left:6.5px">05</span><span class="x " style="left:25px">Export</span><span class="ar" style="left:117px"></span></div><div class="sep" style="left:1px;top:239px;width:126px"></div><div class="mi" style="top:245px;width:128px"><span class="n" style="left:6.5px">06</span><span class="x " style="left:25px">Beenden</span></div></div>
<div class="menu" style="left:129px;top:107px;width:130px;height:68px"><div class="mi" style="top:1px;width:126px"><span class="n" style="left:7px">1</span></div><div class="mi" style="top:17px;width:126px"><span class="n" style="left:7px">2</span><span class="x cy" style="left:25px">Ansichtsfenster</span></div><div class="mi" style="top:33px;width:126px"><span class="n" style="left:7px">3</span></div><div class="mi" style="top:49px;width:126px"><span class="n" style="left:7px">4</span><span class="x cy" style="left:25px">Teilzeichnung</span></div></div>
<svg class="a" style="left:260px;top:125px" width="140" height="150" viewBox="260 125 140 150">
<defs><filter id="sh" x="-20%" y="-20%" width="150%" height="150%"><feGaussianBlur in="SourceAlpha" stdDeviation="2"/><feOffset dx="2" dy="3"/><feComponentTransfer><feFuncA type="linear" slope=".55"/></feComponentTransfer><feMerge><feMergeNode/><feMergeNode in="SourceGraphic"/></feMerge></filter></defs>
<g filter="url(#sh)"><path d="M277.800 142L362 234" stroke="#fb3d3f" stroke-width="8.700" stroke-linecap="round"/><path d="M382 255.700L352 245L373 224.500z" fill="#fb3d3f" stroke="#fb3d3f" stroke-width="1.500" stroke-linejoin="round"/></g></svg>
</div>

</body>
</html>
